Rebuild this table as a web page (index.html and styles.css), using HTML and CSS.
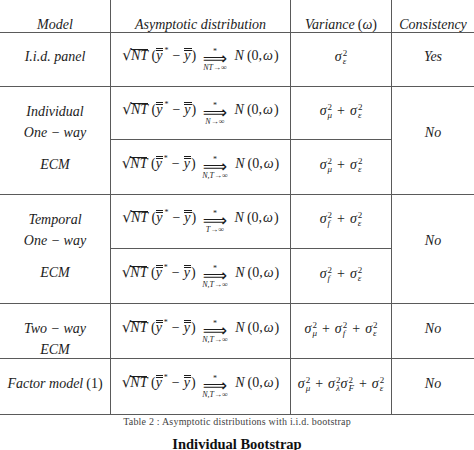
FILE: index.html
```html
<!DOCTYPE html>
<html>
<head>
<meta charset="utf-8">
<link rel="stylesheet" href="styles.css">
</head>
<body>
<div class="tbl">
  <div class="c hd">Model</div>
  <div class="c hd">Asymptotic distribution</div>
  <div class="c hd">Variance<span class="up sp1">(</span>ω<span class="up">)</span></div>
  <div class="c hd last">Consistency</div>

  <div class="c">I.i.d. panel</div>
  <div class="c f"><span class="m"><span class="rad">√</span><span class="ov"><i>NT</i></span> <span class="up">(</span><i class="dy">y</i><sup class="st">*</sup><span class="mn">−</span><i class="dy">y</i><span class="up">)</span> <span class="lim"><span class="la">*</span><span class="ar">⟹</span><span class="lb"><i>NT</i>→∞</span></span> <i>N</i><span class="up sp1">(0,</span><i class="om">ω</i><span class="up">)</span></span></div>
  <div class="c v"><span class="m"><i>σ</i><span class="ss"><span class="sup">2</span><span class="sub"><i>ε</i></span></span></span></div>
  <div class="c last">Yes</div>

  <div class="c span2 stack"><span>Individual</span><span>One − way</span><span class="ecm">ECM</span></div>
  <div class="c f"><span class="m"><span class="rad">√</span><span class="ov"><i>NT</i></span> <span class="up">(</span><i class="dy">y</i><sup class="st">*</sup><span class="mn">−</span><i class="dy">y</i><span class="up">)</span> <span class="lim"><span class="la">*</span><span class="ar">⟹</span><span class="lb"><i>N</i>→∞</span></span> <i>N</i><span class="up sp1">(0,</span><i class="om">ω</i><span class="up">)</span></span></div>
  <div class="c v"><span class="m"><i>σ</i><span class="ss"><span class="sup">2</span><span class="sub"><i>μ</i></span></span><span class="pl">+</span><i>σ</i><span class="ss"><span class="sup">2</span><span class="sub"><i>ε</i></span></span></span></div>
  <div class="c span2 last no">No</div>
  <div class="c f"><span class="m"><span class="rad">√</span><span class="ov"><i>NT</i></span> <span class="up">(</span><i class="dy">y</i><sup class="st">*</sup><span class="mn">−</span><i class="dy">y</i><span class="up">)</span> <span class="lim"><span class="la">*</span><span class="ar">⟹</span><span class="lb"><i>N,T</i>→∞</span></span> <i>N</i><span class="up sp1">(0,</span><i class="om">ω</i><span class="up">)</span></span></div>
  <div class="c v"><span class="m"><i>σ</i><span class="ss"><span class="sup">2</span><span class="sub"><i>μ</i></span></span><span class="pl">+</span><i>σ</i><span class="ss"><span class="sup">2</span><span class="sub"><i>ε</i></span></span></span></div>

  <div class="c span2 stack"><span>Temporal</span><span>One − way</span><span class="ecm">ECM</span></div>
  <div class="c f"><span class="m"><span class="rad">√</span><span class="ov"><i>NT</i></span> <span class="up">(</span><i class="dy">y</i><sup class="st">*</sup><span class="mn">−</span><i class="dy">y</i><span class="up">)</span> <span class="lim"><span class="la">*</span><span class="ar">⟹</span><span class="lb"><i>T</i>→∞</span></span> <i>N</i><span class="up sp1">(0,</span><i class="om">ω</i><span class="up">)</span></span></div>
  <div class="c v"><span class="m"><i>σ</i><span class="ss"><span class="sup">2</span><span class="sub"><i>f</i></span></span><span class="pl">+</span><i>σ</i><span class="ss"><span class="sup">2</span><span class="sub"><i>ε</i></span></span></span></div>
  <div class="c span2 last no">No</div>
  <div class="c f"><span class="m"><span class="rad">√</span><span class="ov"><i>NT</i></span> <span class="up">(</span><i class="dy">y</i><sup class="st">*</sup><span class="mn">−</span><i class="dy">y</i><span class="up">)</span> <span class="lim"><span class="la">*</span><span class="ar">⟹</span><span class="lb"><i>N,T</i>→∞</span></span> <i>N</i><span class="up sp1">(0,</span><i class="om">ω</i><span class="up">)</span></span></div>
  <div class="c v"><span class="m"><i>σ</i><span class="ss"><span class="sup">2</span><span class="sub"><i>f</i></span></span><span class="pl">+</span><i>σ</i><span class="ss"><span class="sup">2</span><span class="sub"><i>ε</i></span></span></span></div>

  <div class="c stack two"><span>Two − way</span><span>ECM</span></div>
  <div class="c f"><span class="m"><span class="rad">√</span><span class="ov"><i>NT</i></span> <span class="up">(</span><i class="dy">y</i><sup class="st">*</sup><span class="mn">−</span><i class="dy">y</i><span class="up">)</span> <span class="lim"><span class="la">*</span><span class="ar">⟹</span><span class="lb"><i>N,T</i>→∞</span></span> <i>N</i><span class="up sp1">(0,</span><i class="om">ω</i><span class="up">)</span></span></div>
  <div class="c v"><span class="m"><i>σ</i><span class="ss"><span class="sup">2</span><span class="sub"><i>μ</i></span></span><span class="pl">+</span><i>σ</i><span class="ss"><span class="sup">2</span><span class="sub"><i>f</i></span></span><span class="pl">+</span><i>σ</i><span class="ss"><span class="sup">2</span><span class="sub"><i>ε</i></span></span></span></div>
  <div class="c last">No</div>

  <div class="c">Factor model <span class="up sp1">(1)</span></div>
  <div class="c f"><span class="m"><span class="rad">√</span><span class="ov"><i>NT</i></span> <span class="up">(</span><i class="dy">y</i><sup class="st">*</sup><span class="mn">−</span><i class="dy">y</i><span class="up">)</span> <span class="lim"><span class="la">*</span><span class="ar">⟹</span><span class="lb"><i>N,T</i>→∞</span></span> <i>N</i><span class="up sp1">(0,</span><i class="om">ω</i><span class="up">)</span></span></div>
  <div class="c v"><span class="m"><i>σ</i><span class="ss"><span class="sup">2</span><span class="sub"><i>μ</i></span></span><span class="pl">+</span><i>σ</i><span class="ss"><span class="sup">2</span><span class="sub"><i>λ</i></span></span><i>σ</i><span class="ss"><span class="sup">2</span><span class="sub"><i>F</i></span></span><span class="pl">+</span><i>σ</i><span class="ss"><span class="sup">2</span><span class="sub"><i>ε</i></span></span></span></div>
  <div class="c last">No</div>
</div>
<p class="caption">Table 2 : Asymptotic distributions with i.i.d. bootstrap</p>
<h2 class="title">Individual Bootstrap</h2>
</body>
</html>
```

FILE: styles.css
```css
* { box-sizing: border-box; margin: 0; padding: 0; }
body {
  width: 474px;
  height: 450px;
  overflow: hidden;
  background: #fff;
  color: #1c1c1c;
  font-family: "Liberation Serif", "DejaVu Serif", serif;
}
.tbl {
  display: grid;
  grid-template-columns: 111px 180px 101px 82px;
  grid-template-rows: 33px 54px 53px 55px 54px 55px 55px 56px;
}
.c {
  border-right: 1px solid #5a5a5a;
  border-bottom: 1px solid #5a5a5a;
  display: flex;
  align-items: center;
  justify-content: center;
  padding-bottom: 5px;
  font-style: italic;
  font-size: 14px;
  white-space: nowrap;
}
.c.last { border-right: none; }
.hd { align-items: flex-end; padding-bottom: 0; line-height: 15px; }
.span2 { grid-row: span 2; }
.stack {
  flex-direction: column;
  justify-content: flex-start;
  padding-top: 14px;
  line-height: 21px;
}
.stack .ecm { margin-top: 11px; }
.no { padding-bottom: 16px; }
.up { font-style: normal; }
.sp1 { margin-left: 3px; }
i { font-style: italic; }
.f, .v { font-style: normal; }
.m { font-size: 14px; line-height: 1; }
.rad { font-size: 15px; font-family: "DejaVu Serif", serif; }
.ov { border-top: 1px solid #1c1c1c; display: inline-block; line-height: 12px; margin-left: -1px; }
.dy {
  display: inline-block;
  line-height: 7px;
  border-top: 3px double #1c1c1c;
  padding: 1px 1px 0 0;
}
.st { font-size: 8px; vertical-align: 7px; margin-left: 1px; }
.mn { margin: 0 4px; }
.lim {
  display: inline-flex;
  flex-direction: column;
  align-items: center;
  vertical-align: middle;
  line-height: 1;
  margin: 0 4px 0 3px;
  position: relative;
  top: 3px;
}
.la { font-size: 8px; height: 6px; line-height: 8px; }
.ar { font-family: "DejaVu Sans", sans-serif; font-size: 17px; height: 9px; line-height: 9px; }
.lb { font-size: 8px; margin-top: 1px; }
.om { margin: 0 1px; }
.ss {
  display: inline-flex;
  flex-direction: column;
  vertical-align: 5px;
  font-size: 9px;
  line-height: 8px;
  margin-left: 1px;
}
.pl { margin: 0 5px; }
.caption {
  text-align: center;
  font-size: 10px;
  line-height: 12px;
  color: #444;
  margin-top: 1px;
  letter-spacing: 0.2px;
}
.title {
  text-align: center;
  font-size: 14.5px;
  line-height: 14px;
  font-weight: bold;
  margin-top: 9px;
  color: #111;
}
```
